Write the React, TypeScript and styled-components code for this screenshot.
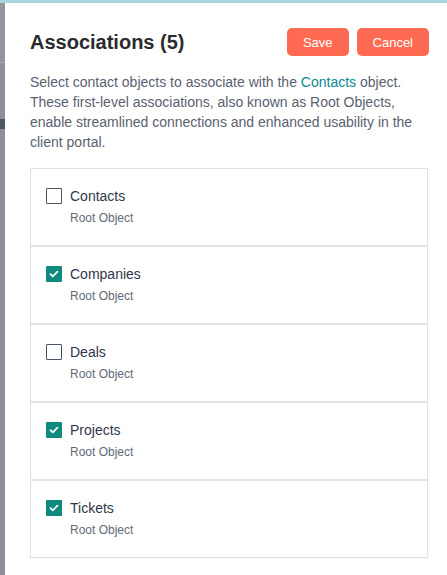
import { ReactElement, useState } from 'react';
import styled, { createGlobalStyle } from 'styled-components';

const GlobalStyle = createGlobalStyle`
  html, body {
    margin: 0;
    padding: 0;
    background: #ffffff;
  }
  * {
    box-sizing: border-box;
  }
`;

const Page = styled.div`
  width: 447px;
  height: 575px;
  display: flex;
  flex-direction: column;
  font-family: 'Liberation Sans', Arial, sans-serif;
  overflow: hidden;
`;

const TopStrip = styled.div`
  height: 3px;
  background: #a9d5de;
  flex-shrink: 0;
`;

const Body = styled.div`
  flex: 1;
  display: flex;
`;

const SideStrip = styled.div`
  width: 5px;
  flex-shrink: 0;
  background: #8d9197;
  display: flex;
  flex-direction: column;
`;

const SideSegment = styled.div<{ $h: number; $c: string }>`
  height: ${(p) => p.$h}px;
  background: ${(p) => p.$c};
  flex-shrink: 0;
`;

const Panel = styled.div`
  flex: 1;
  background: #ffffff;
  padding: 25px 18px 0 25px;
`;

const Header = styled.div`
  display: flex;
  align-items: center;
  justify-content: space-between;
  height: 28px;
`;

const Title = styled.h2`
  margin: 0;
  font-size: 20px;
  font-weight: 700;
  color: #2b2b2e;
`;

const Actions = styled.div`
  display: flex;
  gap: 8px;
`;

const Button = styled.button`
  height: 28px;
  padding: 0 16px;
  border: none;
  border-radius: 5px;
  background: #ff6a52;
  color: #ffffff;
  font-family: 'Liberation Sans', Arial, sans-serif;
  font-size: 13px;
  cursor: pointer;
`;

const Description = styled.p`
  margin: 16px 0 0;
  font-size: 14px;
  line-height: 20px;
  color: #5a6170;
  padding-right: 6px;
`;

const Link = styled.a`
  color: #0b8a94;
  text-decoration: none;
`;

const List = styled.ul`
  list-style: none;
  margin: 16px 1px 0 0;
  padding: 0;
  border: 1px solid #e1e1e6;
  box-shadow: 0 1px 2px rgba(0, 0, 0, 0.04);
`;

const Row = styled.li`
  display: flex;
  align-items: flex-start;
  gap: 8px;
  padding: 19px 15px;
  & + & {
    border-top: 2px solid #e3e3e8;
  }
`;

const Box = styled.span<{ $checked: boolean }>`
  width: 16px;
  height: 16px;
  flex-shrink: 0;
  display: flex;
  align-items: center;
  justify-content: center;
  border-radius: 1px;
  border: ${(p) => (p.$checked ? 'none' : '1.5px solid #4b5262')};
  background: ${(p) => (p.$checked ? '#0e8a7e' : '#ffffff')};
  cursor: pointer;
`;

const Texts = styled.div`
  display: flex;
  flex-direction: column;
  gap: 6px;
`;

const Label = styled.span`
  font-size: 14px;
  line-height: 16px;
  color: #30374a;
`;

const Sub = styled.span`
  font-size: 12px;
  line-height: 16px;
  color: #626a78;
`;

const initialItems = [
  { name: 'Contacts', checked: false },
  { name: 'Companies', checked: true },
  { name: 'Deals', checked: false },
  { name: 'Projects', checked: true },
  { name: 'Tickets', checked: true },
];

const Check = (): ReactElement => (
  <svg width="10" height="8" viewBox="0 0 10 8">
    <path d="M1.5 4.2 L3.8 6.3 L8.5 1.6" fill="none" stroke="#ffffff" strokeWidth="1.8" strokeLinecap="round" strokeLinejoin="round" />
  </svg>
);

const App = (): ReactElement => {
  const [items, setItems] = useState(initialItems);

  const toggle = (name: string): void => {
    setItems((prev) => prev.map((i) => (i.name === name ? { ...i, checked: !i.checked } : i)));
  };

  return (
    <Page>
      <GlobalStyle />
      <TopStrip />
      <Body>
        <SideStrip>
          <SideSegment $h={59} $c="#92969c" />
          <SideSegment $h={1} $c="#a3a7ac" />
          <SideSegment $h={56} $c="#8d9197" />
          <SideSegment $h={10} $c="#4f5865" />
        </SideStrip>
        <Panel>
          <Header>
            <Title>Associations (5)</Title>
            <Actions>
              <Button>Save</Button>
              <Button>Cancel</Button>
            </Actions>
          </Header>
          <Description>
            Select contact objects to associate with the <Link>Contacts</Link> object. These first-level
            associations, also known as Root Objects, enable streamlined connections and enhanced usability in
            the client portal.
          </Description>
          <List>
            {items.map((item) => (
              <Row key={item.name}>
                <Box $checked={item.checked} onClick={() => toggle(item.name)}>
                  {item.checked && <Check />}
                </Box>
                <Texts>
                  <Label>{item.name}</Label>
                  <Sub>Root Object</Sub>
                </Texts>
              </Row>
            ))}
          </List>
        </Panel>
      </Body>
    </Page>
  );
};

export default App;
